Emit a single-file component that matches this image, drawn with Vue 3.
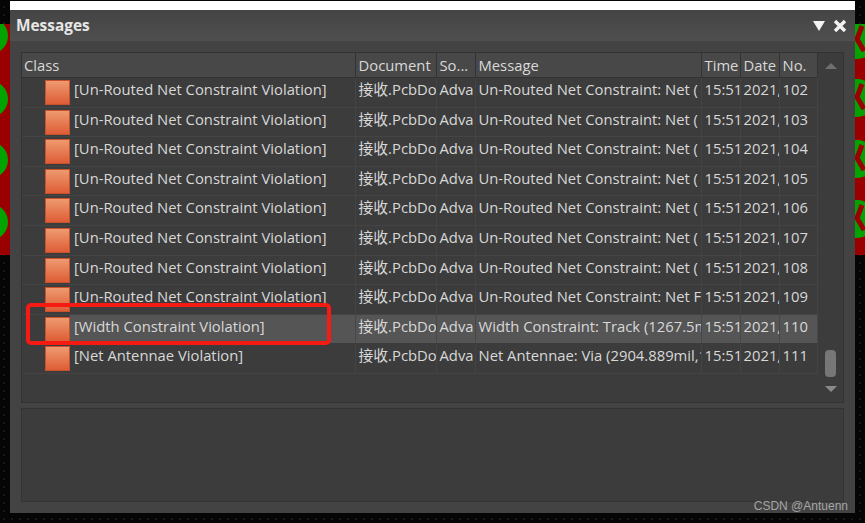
<template>
  <div class="scene">
    <div class="pcb">
      <span v-for="y in leftPads" :key="'l' + y" class="pad pad-left" :style="{ top: y + 'px' }"></span>
      <svg v-for="y in rightPads" :key="'r' + y" class="pad-right" :style="{ top: y + 'px' }" width="20" height="40" viewBox="0 0 20 40">
        <circle cx="2" cy="20" r="19" fill="#00a300" />
        <path d="M7 6L2 19l7 12" fill="none" stroke="#9b0000" stroke-width="5" />
      </svg>
    </div>
    <div class="white-strip"></div>

    <div class="panel">
      <div class="titlebar">
        <span class="title">Messages</span>
        <svg class="tb-icon" width="12" height="10" viewBox="0 0 12 10"><path d="M0 0h12L6 10z" fill="#f2f2f2" /></svg>
        <svg class="tb-icon" width="14" height="14" viewBox="0 0 14 14"><path d="M2 2l10 10M12 2L2 12" stroke="#f2f2f2" stroke-width="3.4" fill="none" /></svg>
      </div>

      <div class="body">
        <div class="list-box">
          <div class="table">
            <div class="row head">
              <div v-for="h in headers" :key="h" class="cell">{{ h }}</div>
            </div>
            <div
              v-for="r in rows"
              :key="r.no"
              class="row"
              :class="{ selected: r.selected }"
            >
              <div class="cell class-cell">
                <span class="swatch"></span>
                <span class="class-text">{{ r.cls }}</span>
              </div>
              <div class="cell">接收.PcbDo</div>
              <div class="cell">Adva</div>
              <div class="cell">{{ r.msg }}</div>
              <div class="cell">15:51</div>
              <div class="cell">2021,</div>
              <div class="cell">{{ r.no }}</div>
            </div>
          </div>
          <div class="scrollbar">
            <svg width="12" height="6" viewBox="0 0 12 6"><path d="M0 6h12L6 0z" fill="#6f6f6f" /></svg>
            <span class="thumb"></span>
            <svg width="12" height="6" viewBox="0 0 12 6"><path d="M0 0h12L6 6z" fill="#8a8a8a" /></svg>
          </div>
        </div>
        <div class="detail-box"></div>
      </div>
      <span class="watermark">CSDN @Antuenn</span>
    </div>

    <div class="annotation"></div>
  </div>
</template>

<script setup>
const headers = ['Class', 'Document', 'So...', 'Message', 'Time', 'Date', 'No.']

// tops relative to the red board strip
const leftPads = [-6, 57, 118, 180]
const rightPads = [-4, 54, 115, 175]

const routed = '[Un-Routed Net Constraint Violation]'
const routedMsg = 'Un-Routed Net Constraint: Net ('

const rows = [
  { no: 102, cls: routed, msg: routedMsg },
  { no: 103, cls: routed, msg: routedMsg },
  { no: 104, cls: routed, msg: routedMsg },
  { no: 105, cls: routed, msg: routedMsg },
  { no: 106, cls: routed, msg: routedMsg },
  { no: 107, cls: routed, msg: routedMsg },
  { no: 108, cls: routed, msg: routedMsg },
  { no: 109, cls: routed, msg: 'Un-Routed Net Constraint: Net F' },
  { no: 110, cls: '[Width Constraint Violation]', msg: 'Width Constraint: Track (1267.5m', selected: true },
  { no: 111, cls: '[Net Antennae Violation]', msg: 'Net Antennae: Via (2904.889mil,1' },
]
</script>

<style scoped>
.scene {
  position: relative;
  width: 865px;
  height: 523px;
  padding: 10px;
  box-sizing: border-box;
  overflow: hidden;
  background: #050505 radial-gradient(#2c2c2c 0.6px, transparent 0.8px) 0 3px / 8px 8px;
  font-family: "Open Sans", "Noto Sans CJK SC", sans-serif;
}
.pcb {
  position: absolute;
  left: 0;
  right: 0;
  top: 24px;
  height: 231px;
  background: #9b0000;
  overflow: hidden;
}
.pad {
  position: absolute;
  width: 36px;
  height: 36px;
  border-radius: 50%;
  background: #00a300;
}
.pad-left { left: -28px; }
.pad-right { position: absolute; left: 855px; }
.white-strip {
  position: absolute;
  left: 10px;
  top: 1px;
  width: 845px;
  height: 9px;
  background: #fff;
}
.panel {
  position: relative;
  height: 503px;
  background: #434343;
  display: flex;
  flex-direction: column;
}
.titlebar {
  height: 31px;
  flex: none;
  display: flex;
  align-items: center;
  gap: 8px;
  padding: 0 8px 0 6px;
  background: linear-gradient(#444444, #4f4f4f);
}
.title {
  flex: 1;
  font-size: 15.4px;
  font-weight: 700;
  color: #e6e6e6;
}
.body {
  flex: 1;
  display: flex;
  flex-direction: column;
  gap: 5px;
  padding: 11px;
}
.list-box {
  height: 351px;
  flex: none;
  display: flex;
  box-sizing: border-box;
  border: 1px solid #333;
  background: #3c3c3c;
}
.table { width: 796px; flex: none; }
.row {
  display: grid;
  grid-template-columns: 334px 81px 39px 226px 39px 39px 38px;
  height: 29.6px;
  box-sizing: border-box;
  border-bottom: 1px solid #444;
  color: #d8d8d8;
  font-size: 14.8px;
}
.row.head {
  height: 25px;
  background: #484848;
  border-bottom: 1px solid #333;
}
.row.selected { border-bottom-color: #3c3c3c; }
.cell {
  overflow: hidden;
  white-space: nowrap;
  border-right: 1px solid #444;
  padding-left: 2px;
  line-height: 23px;
}
.head .cell { border-right-color: #333; line-height: 25px; }
.row.selected .cell { background: #555; border-right-color: #474747; }
.row .cell:not(:first-child) { padding-left: 2.5px; }
.row.selected .class-cell { background: none; }
.class-cell {
  display: flex;
  align-items: stretch;
  padding-left: 0;
}
.swatch {
  flex: none;
  width: 25px;
  height: 25px;
  margin: 2px 0 0 23px;
  box-sizing: border-box;
  border: 1px solid #c8502c;
  background: linear-gradient(#ee9a70, #de5d36);
}
.class-text {
  flex: 1;
  padding-left: 4px;
  line-height: 23px;
}
.selected .class-text { background: #555; }
.scrollbar {
  flex: 1;
  display: flex;
  flex-direction: column;
  align-items: center;
  padding: 10px 0;
  box-sizing: border-box;
}
.scrollbar svg { flex: none; }
.thumb {
  margin-top: auto;
  margin-bottom: 9px;
  width: 11px;
  height: 27px;
  border-radius: 4px;
  background: #777;
}
.detail-box {
  flex: 1;
  box-sizing: border-box;
  border: 1px solid #333;
  background: #3c3c3c;
}
.watermark {
  position: absolute;
  right: 7px;
  bottom: 0;
  font-family: "Liberation Sans", sans-serif;
  font-size: 12px;
  color: #a5a5a5;
}
.annotation {
  position: absolute;
  left: 26px;
  top: 303px;
  width: 305px;
  height: 42px;
  box-sizing: border-box;
  border: 4px solid #f51a12;
  border-radius: 5px;
}
</style>
